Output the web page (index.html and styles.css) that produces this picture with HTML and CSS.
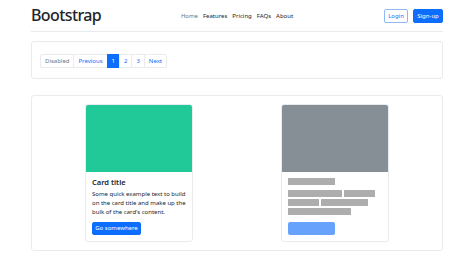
FILE: index.html
```html
<!DOCTYPE html>
<html lang="en">
<head>
    <meta charset="UTF-8">
    <meta name="viewport" content="width=device-width, initial-scale=1.0">
    <title>Bootstrap</title>
    <link rel="stylesheet" href="styles.css">
</head>
<body>

    <div class="container">
        <header class="header">
            <a href="#" class="brand">Bootstrap</a>
            <ul class="nav">
                <li><a href="#" class="nav-link muted">Home</a></li>
                <li><a href="#" class="nav-link">Features</a></li>
                <li><a href="#" class="nav-link">Pricing</a></li>
                <li><a href="#" class="nav-link">FAQs</a></li>
                <li><a href="#" class="nav-link">About</a></li>
            </ul>
            <div class="actions">
                <button class="btn btn-outline">Login</button>
                <button class="btn btn-primary">Sign-up</button>
            </div>
        </header>

        <div class="box box-pagination">
            <ul class="pagination">
                <li class="page-item disabled">Disabled</li>
                <li class="page-item">Previous</li>
                <li class="page-item active">1</li>
                <li class="page-item">2</li>
                <li class="page-item">3</li>
                <li class="page-item">Next</li>
            </ul>
        </div>

        <div class="box box-cards">
            <div class="col">
                <div class="card">
                    <div class="card-img green"></div>
                    <div class="card-body">
                        <h5 class="card-title">Card title</h5>
                        <p class="card-text">Some quick example text to build on the card title and make up the bulk of the card's content.</p>
                        <a href="#" class="btn btn-primary btn-card">Go somewhere</a>
                    </div>
                </div>
            </div>
            <div class="col">
                <div class="card">
                    <div class="card-img gray"></div>
                    <div class="card-body">
                        <div class="ph-row"><span class="ph col-6"></span></div>
                        <div class="ph-lines">
                            <div class="ph-row"><span class="ph col-7"></span><span class="ph col-4"></span></div>
                            <div class="ph-row"><span class="ph col-4"></span><span class="ph col-6"></span></div>
                            <div class="ph-row"><span class="ph col-8"></span></div>
                        </div>
                        <span class="ph ph-btn col-6"></span>
                    </div>
                </div>
            </div>
        </div>
    </div>

</body>
</html>
```

FILE: styles.css
```css
body {
    margin: 0;
    background-color: #ffffff;
    color: #212529;
    font-family: "Noto Sans", "DejaVu Sans", sans-serif;
    font-size: 6px;
}
a {
    text-decoration: none;
}
.container {
    width: 412px;
    margin: 0 auto;
}
.header {
    display: flex;
    align-items: center;
    height: 32px;
    border-bottom: 1px solid #e9ecef;
    box-sizing: border-box;
}
.brand {
    flex: 1;
    color: #212529;
    font-size: 16px;
    font-weight: 500;
    letter-spacing: -0.6px;
    margin-top: -2px;
}
.nav {
    display: flex;
    list-style: none;
    margin: 0;
    padding: 0;
    gap: 5px;
}
.nav-link {
    color: #212529;
    font-size: 6px;
}
.nav-link.muted {
    color: #6c757d;
}
.actions {
    flex: 1;
    display: flex;
    justify-content: flex-end;
    gap: 5px;
}
.btn {
    font-family: inherit;
    font-size: 6px;
    height: 14px;
    padding: 0 3px;
    border-radius: 2px;
    border: 1px solid #0d6efd;
    line-height: 12px;
    box-sizing: border-box;
    cursor: pointer;
}
.btn-outline {
    background: #ffffff;
    color: #0d6efd;
    border-color: #8fb8f8;
    width: 24px;
}
.btn-primary {
    background: #0d6efd;
    color: #ffffff;
}
.actions .btn-primary {
    width: 30px;
}
.box {
    border: 1px solid #e9ecef;
    border-radius: 3px;
}
.box-pagination {
    margin-top: 9px;
    padding: 12px 8px 10px;
}
.pagination {
    display: flex;
    list-style: none;
    margin: 0;
    padding: 0;
}
.page-item {
    height: 14px;
    line-height: 12px;
    padding: 0 4px;
    border: 1px solid #e9ecef;
    margin-left: -1px;
    color: #0d6efd;
    box-sizing: border-box;
}
.page-item:first-child {
    margin-left: 0;
    border-radius: 2px 0 0 2px;
}
.page-item:last-child {
    border-radius: 0 2px 2px 0;
}
.page-item.disabled {
    color: #6c757d;
}
.page-item.active {
    background: #0d6efd;
    border-color: #0d6efd;
    color: #ffffff;
}
.box-cards {
    margin-top: 16px;
    padding: 8px 9px;
    display: flex;
}
.col {
    flex: 1;
    display: flex;
    justify-content: center;
}
.card {
    width: 106px;
    border: 1px solid #e9ecef;
    border-radius: 3px;
    overflow: hidden;
}
.card-img {
    height: 67px;
}
.green {
    background: #20c997;
}
.gray {
    background: #868e96;
}
.card-body {
    padding: 6px 6px 6px;
}
.card-title {
    margin: 0 0 3px;
    font-size: 7.5px;
    font-weight: 600;
    line-height: 9px;
}
.card-text {
    margin: 0 0 5px;
    line-height: 9px;
}
.btn-card {
    display: inline-block;
    width: 49px;
    text-align: center;
    padding: 0;
    height: 13px;
    line-height: 11px;
}
.ph-row {
    display: flex;
    gap: 2px;
    height: 7px;
}
.ph {
    display: block;
    background: #adadad;
    height: 7px;
    border-radius: 0.5px;
}
.ph-lines {
    margin-top: 5px;
    display: flex;
    flex-direction: column;
    gap: 2px;
}
.ph-btn {
    margin-top: 7px;
    height: 13px;
    background: #67a3fd;
    border-radius: 2px;
}
.col-4 { width: 31px; }
.col-6 { width: 47px; }
.col-7 { width: 54px; }
.col-8 { width: 63px; }
```
